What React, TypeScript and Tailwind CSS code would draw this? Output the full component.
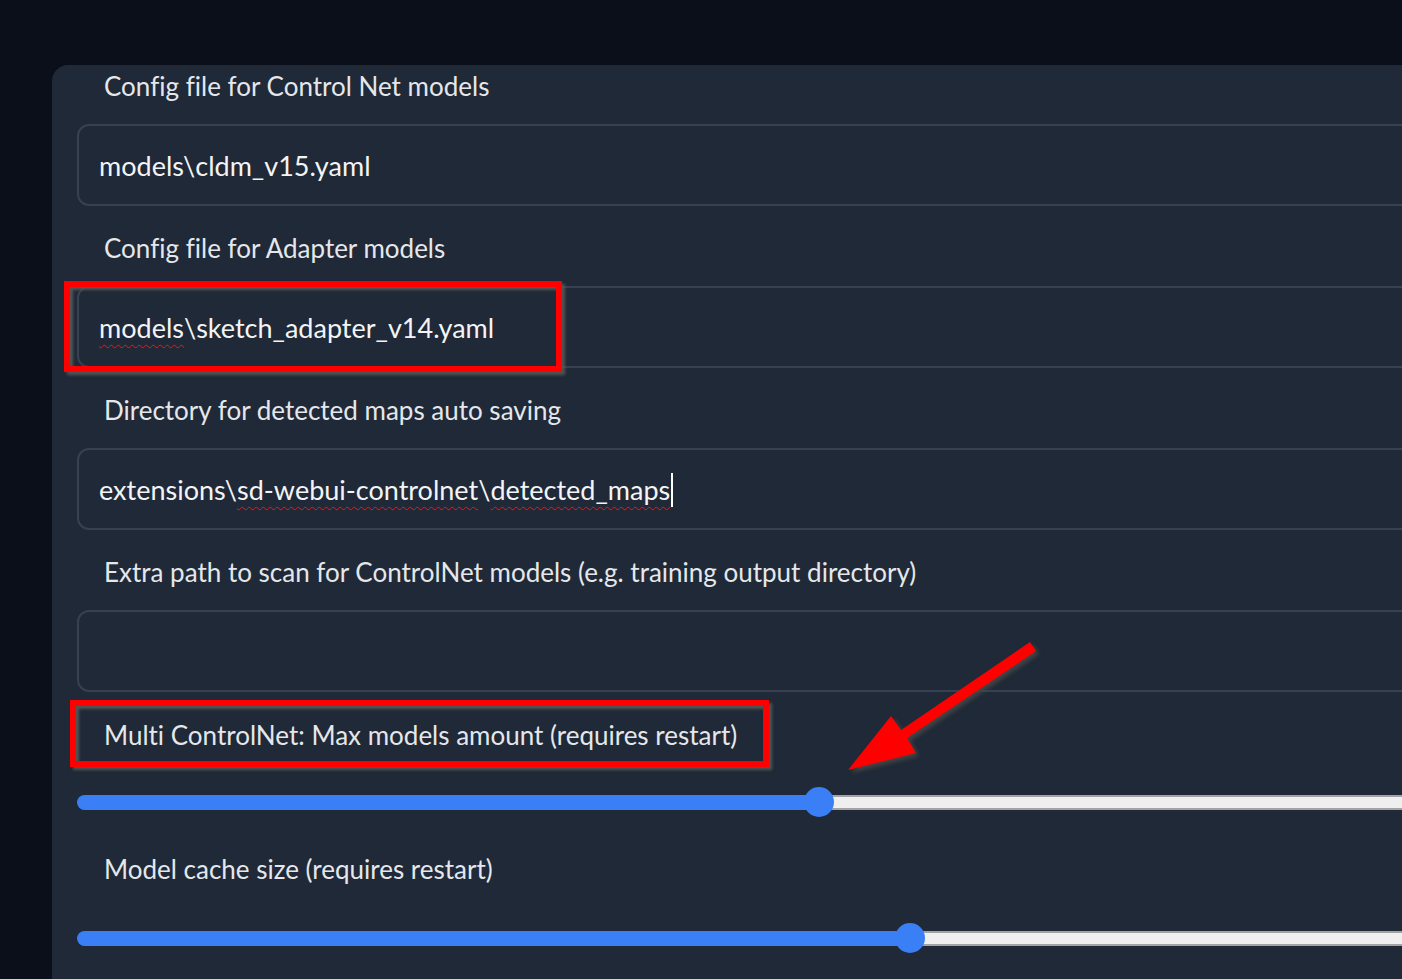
import React from "react";

const font = { fontFamily: "Lato, 'Noto Sans', sans-serif" };

const Label = ({ text, gap = true }: { text: string; gap?: boolean }) => (
    <div
        className={
            "h-[36px] pl-[27px] flex items-center text-[26px] text-[#e5e7eb] leading-none [font-variant-ligatures:none] " +
            (gap ? "mb-[20px]" : "")
        }
    >
        {text}
    </div>
);

const Field = ({ children }: { children?: React.ReactNode }) => (
    <div className="h-[82px] rounded-xl border-2 border-[#374151] bg-[#1f2937] px-[20px] pt-[2px] flex items-center text-[27px] text-[#f3f4f6] [font-variant-ligatures:none]">
        {children}
    </div>
);

const Squiggle = ({ children }: { children: React.ReactNode }) => (
    <span className="underline decoration-wavy decoration-[#e11d1d] decoration-1 underline-offset-[6px]">{children}</span>
);

const Slider = ({ fill }: { fill: number }) => (
    <div className="relative h-[30px] flex items-center">
        <div className="flex w-full h-[15px]">
            <div className="h-full bg-[#3a7ff6] rounded-l-full" style={{ width: fill }} />
            <div className="flex-1 h-full bg-[#efefef] border-y-2 border-[#a3a3a3]" />
        </div>
        <div
            className="absolute top-0 w-[30px] h-[30px] rounded-full bg-[#3a7ff6]"
            style={{ left: fill - 15 }}
        />
    </div>
);

export default function App() {
    return (
        <div className="w-[1402px] h-[979px] overflow-hidden bg-[#0b0f19] pt-[65px] pl-[52px]" style={font}>
            <div className="relative w-[1420px] h-[960px] bg-[#1f2937] rounded-tl-2xl pl-[25px] pt-[3px]">
                <Label text="Config file for Control Net models" />
                <Field>models\cldm_v15.yaml</Field>

                <div className="mt-[24px]">
                    <Label text="Config file for Adapter models" />
                    <Field>
                        <Squiggle>models</Squiggle>\sketch_adapter_v14.yaml
                    </Field>
                </div>

                <div className="mt-[24px]">
                    <Label text="Directory for detected maps auto saving" />
                    <Field>
                        extensions\<Squiggle>sd-webui-controlnet</Squiggle>\<Squiggle>detected_maps</Squiggle>
                        <span className="inline-block w-[2px] h-[34px] bg-white ml-[1px]" />
                    </Field>
                </div>

                <div className="mt-[24px]">
                    <Label text="Extra path to scan for ControlNet models (e.g. training output directory)" />
                    <Field />
                </div>

                <div className="mt-[25px]">
                    <Label text="Multi ControlNet: Max models amount (requires restart)" gap={false} />
                    <div className="mt-[34px]">
                        <Slider fill={742} />
                    </div>
                </div>

                <div className="mt-[34px]">
                    <Label text="Model cache size (requires restart)" gap={false} />
                    <div className="mt-[36px]">
                        <Slider fill={833} />
                    </div>
                </div>

                {/* annotation boxes */}
                <div className="absolute left-[12px] top-[216px] w-[498px] h-[91px] border-[6px] border-[#ff0000] shadow-[3px_3px_3px_rgba(90,90,90,0.9),inset_3px_3px_3px_rgba(90,90,90,0.9)]" />
                <div className="absolute left-[18px] top-[635px] w-[699px] h-[67px] border-[6px] border-[#ff0000] shadow-[3px_3px_3px_rgba(90,90,90,0.9),inset_3px_3px_3px_rgba(90,90,90,0.9)]" />
            </div>

            {/* arrow */}
            <svg
                className="absolute left-0 top-0 drop-shadow-[3px_3px_2px_rgba(70,70,70,0.9)]"
                width="1402"
                height="979"
                viewBox="0 0 1402 979"
            >
                <polygon
                    points="1030,642 1036,651 907,738 916,753 848,770 891,716 901,730"
                    fill="#ff0000"
                />
            </svg>
        </div>
    );
}
